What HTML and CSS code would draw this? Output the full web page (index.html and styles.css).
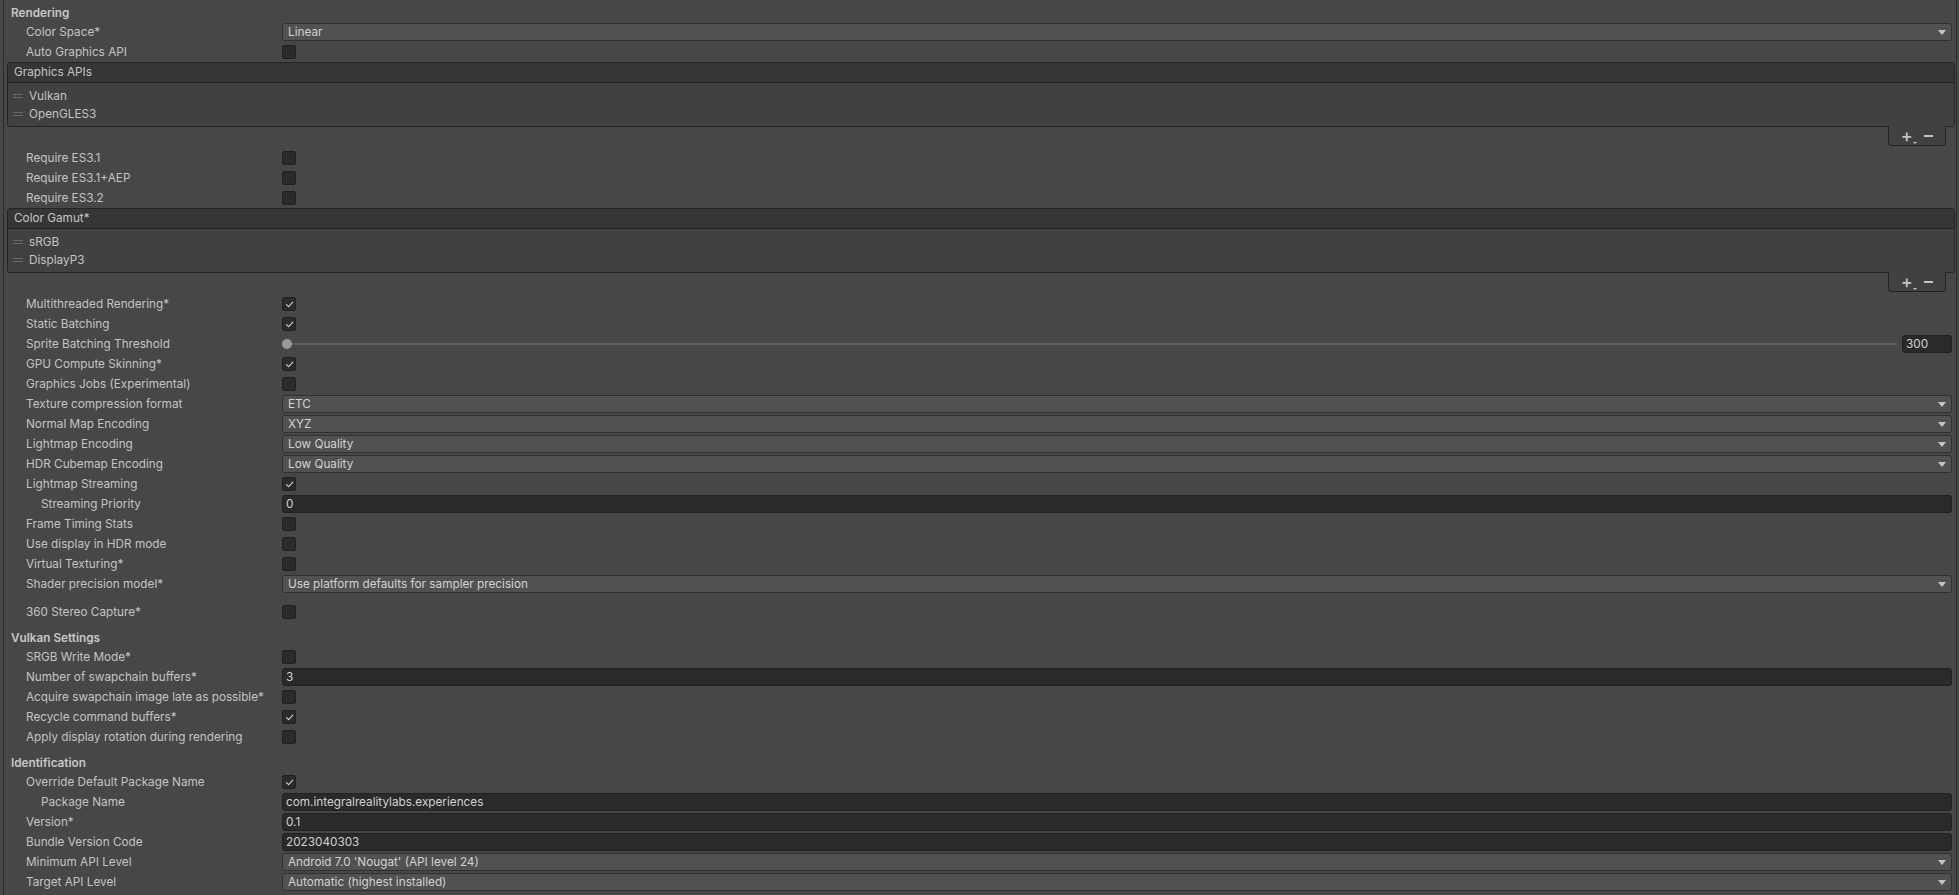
FILE: index.html
```html
<!DOCTYPE html>
<html lang="en">
<head>
  <meta charset="UTF-8">
  <title>Player Settings - Other Settings</title>
  <link rel="stylesheet" href="styles.css">
</head>
<body>
  <div class="inspector">
    <div class="section-title">Rendering</div>
    <div class="row"><span class="label">Color Space*</span><div class="dropdown">Linear</div></div>
    <div class="row"><span class="label">Auto Graphics API</span><span class="checkbox"></span></div>

    <div class="reorder-list">
      <div class="list-header">Graphics APIs</div>
      <div class="list-body">
        <div class="list-item"><span class="handle"></span>Vulkan</div>
        <div class="list-item"><span class="handle"></span>OpenGLES3</div>
      </div>
    </div>
    <div class="list-footer"><span class="add">+<i></i></span><span class="remove"></span></div>

    <div class="row"><span class="label">Require ES3.1</span><span class="checkbox"></span></div>
    <div class="row"><span class="label">Require ES3.1+AEP</span><span class="checkbox"></span></div>
    <div class="row"><span class="label">Require ES3.2</span><span class="checkbox"></span></div>

    <div class="reorder-list">
      <div class="list-header">Color Gamut*</div>
      <div class="list-body">
        <div class="list-item"><span class="handle"></span>sRGB</div>
        <div class="list-item"><span class="handle"></span>DisplayP3</div>
      </div>
    </div>
    <div class="list-footer"><span class="add">+<i></i></span><span class="remove"></span></div>

    <div class="row"><span class="label">Multithreaded Rendering*</span><span class="checkbox checked"></span></div>
    <div class="row"><span class="label">Static Batching</span><span class="checkbox checked"></span></div>
    <div class="row">
      <span class="label">Sprite Batching Threshold</span>
      <div class="slider">
        <div class="slider-track"><span class="knob"></span></div>
        <div class="field number">300</div>
      </div>
    </div>
    <div class="row"><span class="label">GPU Compute Skinning*</span><span class="checkbox checked"></span></div>
    <div class="row"><span class="label">Graphics Jobs (Experimental)</span><span class="checkbox"></span></div>
    <div class="row"><span class="label">Texture compression format</span><div class="dropdown">ETC</div></div>
    <div class="row"><span class="label">Normal Map Encoding</span><div class="dropdown">XYZ</div></div>
    <div class="row"><span class="label">Lightmap Encoding</span><div class="dropdown">Low Quality</div></div>
    <div class="row"><span class="label">HDR Cubemap Encoding</span><div class="dropdown">Low Quality</div></div>
    <div class="row"><span class="label">Lightmap Streaming</span><span class="checkbox checked"></span></div>
    <div class="row"><span class="label indent">Streaming Priority</span><div class="field">0</div></div>
    <div class="row"><span class="label">Frame Timing Stats</span><span class="checkbox"></span></div>
    <div class="row"><span class="label">Use display in HDR mode</span><span class="checkbox"></span></div>
    <div class="row"><span class="label">Virtual Texturing*</span><span class="checkbox"></span></div>
    <div class="row"><span class="label">Shader precision model*</span><div class="dropdown">Use platform defaults for sampler precision</div></div>
    <div class="row spaced"><span class="label">360 Stereo Capture*</span><span class="checkbox"></span></div>

    <div class="section-title gap">Vulkan Settings</div>
    <div class="row"><span class="label">SRGB Write Mode*</span><span class="checkbox"></span></div>
    <div class="row"><span class="label">Number of swapchain buffers*</span><div class="field">3</div></div>
    <div class="row"><span class="label">Acquire swapchain image late as possible*</span><span class="checkbox"></span></div>
    <div class="row"><span class="label">Recycle command buffers*</span><span class="checkbox checked"></span></div>
    <div class="row"><span class="label">Apply display rotation during rendering</span><span class="checkbox"></span></div>

    <div class="section-title gap">Identification</div>
    <div class="row"><span class="label">Override Default Package Name</span><span class="checkbox checked"></span></div>
    <div class="row"><span class="label indent">Package Name</span><div class="field">com.integralrealitylabs.experiences</div></div>
    <div class="row"><span class="label">Version*</span><div class="field">0.1</div></div>
    <div class="row"><span class="label">Bundle Version Code</span><div class="field">2023040303</div></div>
    <div class="row"><span class="label">Minimum API Level</span><div class="dropdown">Android 7.0 'Nougat' (API level 24)</div></div>
    <div class="row"><span class="label">Target API Level</span><div class="dropdown">Automatic (highest installed)</div></div>
  </div>
</body>
</html>
```

FILE: styles.css
```css
* {
  margin: 0;
  padding: 0;
  box-sizing: border-box;
}
html, body {
  height: 100%;
  overflow: hidden;
}
body {
  font-family: 'Inter', 'Noto Sans', sans-serif;
  font-size: 11.75px;
  background: #474747;
  color: #c4c4c4;
}
.inspector {
  margin: 0 2px 0 3px;
  min-height: 100%;
  border-left: 1px solid #2b2b2b;
  border-right: 1px solid #2b2b2b;
  padding: 4px 1px 0 3px;
}
.section-title {
  height: 18px;
  line-height: 18px;
  padding-left: 4px;
  font-weight: 600;
  color: #c8c8c8;
}
.section-title.gap {
  margin-top: 7px;
}
.row {
  display: grid;
  grid-template-columns: 256px 1fr;
  align-items: center;
  height: 20px;
  padding: 0 3px 1px 19px;
}
.row.spaced {
  margin-top: 8px;
}
.label {
  white-space: nowrap;
  overflow: hidden;
}
.label.indent {
  padding-left: 15px;
}
.checkbox {
  width: 14px;
  height: 14px;
  background: #2b2b2b;
  border: 1px solid #202020;
  border-radius: 2px;
  position: relative;
}
.checkbox.checked::after {
  content: "";
  position: absolute;
  left: 3px;
  top: 2px;
  width: 6px;
  height: 3px;
  border-left: 1.5px solid #e0e0e0;
  border-bottom: 1.5px solid #e0e0e0;
  transform: rotate(-48deg) translate(-1px, 1px);
}
.dropdown {
  height: 18px;
  line-height: 16px;
  padding-left: 5px;
  background: #515151;
  border: 1px solid #303030;
  border-radius: 3px;
  color: #d2d2d2;
  position: relative;
}
.dropdown::after {
  content: "";
  position: absolute;
  right: 5px;
  top: 6px;
  border-left: 4px solid transparent;
  border-right: 4px solid transparent;
  border-top: 5px solid #c4c4c4;
}
.field {
  height: 18px;
  line-height: 16px;
  padding-left: 3px;
  background: #2a2a2a;
  border: 1px solid #212121;
  border-radius: 3px;
  color: #d2d2d2;
}
.slider {
  display: flex;
  align-items: center;
  gap: 5px;
}
.slider-track {
  flex: 1;
  height: 2px;
  background: #5e5e5e;
  position: relative;
}
.knob {
  position: absolute;
  left: 0;
  top: -4px;
  width: 10px;
  height: 10px;
  border-radius: 50%;
  background: #999;
}
.field.number {
  width: 50px;
}
.reorder-list {
  border: 1px solid #242424;
  border-radius: 3px;
  overflow: hidden;
}
.list-header {
  height: 20px;
  line-height: 19px;
  padding-left: 6px;
  background: #363636;
  border-bottom: 1px solid #242424;
}
.list-body {
  background: #414141;
  padding: 4px 0 3px;
}
.list-item {
  display: flex;
  align-items: center;
  height: 18px;
}
.handle {
  width: 10px;
  height: 4px;
  margin: 0 6px 0 5px;
  border-top: 1px solid #696969;
  border-bottom: 1px solid #696969;
}
.list-footer {
  display: flex;
  align-items: center;
  justify-content: space-around;
  width: 58px;
  height: 20px;
  margin: -1px 9px 2px auto;
  background: #414141;
  border: 1px solid #242424;
  border-top: none;
  border-radius: 0 0 4px 4px;
  padding: 0 6px;
}
.add {
  position: relative;
  font-size: 18px;
  font-weight: 500;
  line-height: 16px;
  color: #c4c4c4;
}
.add i {
  position: absolute;
  right: -4px;
  bottom: 0;
  border-left: 2px solid transparent;
  border-right: 2px solid transparent;
  border-top: 2px solid #c4c4c4;
}
.remove {
  width: 9px;
  height: 2px;
  background: #c4c4c4;
}
```
